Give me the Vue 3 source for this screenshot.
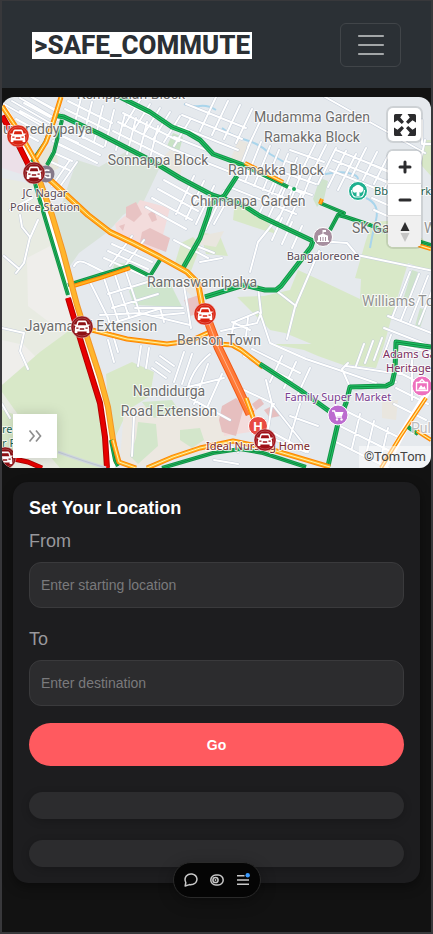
<template>
    <div class="page">
        <header class="navbar">
            <a class="brand" href="#">&gt;SAFE_COMMUTE</a>
            <button class="toggler" type="button" aria-label="Toggle navigation">
                <svg width="30" height="30" viewBox="0 0 30 30">
                    <path d="M3 6h24M3 15h24M3 24h24" stroke="#a3a6a8" stroke-width="2.200" stroke-linecap="round" />
                </svg>
            </button>
        </header>

        <section class="map">
            <svg class="map-canvas" viewBox="2 97 429 371" preserveAspectRatio="xMidYMid slice">
                <rect x="2" y="97" width="429" height="371" fill="#e5e9ed" />
                <path v-for="(a, i) in areas" :key="'a' + i" :d="a.d" :fill="a.fill" />
                <path v-for="(d, i) in water" :key="'w' + i" :d="d" class="water" />
                <path :d="streets" class="street-case" />
                <path :d="streets" class="street" />
                <g v-for="(r, i) in roads" :key="'r' + i" class="road">
                    <path :d="r.d" :stroke="r.edge" :stroke-width="r.w" />
                    <path :d="r.d" :stroke="r.color" :stroke-width="r.w - 2" />
                    <path v-if="r.line" :d="r.d" :stroke="r.line" stroke-width="1" />
                </g>
                <circle cx="294" cy="189" r="2" fill="#19a85b" />

                <text
                    v-for="(l, i) in labels"
                    :key="'l' + i"
                    :x="l.x"
                    :y="l.y"
                    :class="['label', l.kind]"
                    :text-anchor="l.anchor || 'middle'"
                >{{ l.text }}</text>

                <g transform="translate(46 174)">
                    <circle r="8.500" fill="#85798a" />
                    <path d="M3.500-3.500Q-1-5-2.500-2T1 3.500H4V0H-4" fill="none" stroke="#fff" stroke-width="1.500" />
                </g>
                <g transform="translate(323 237)">
                    <circle r="9.500" fill="#a78f9f" stroke="#fff" />
                    <path d="M-6 5v-1.500h1V-1h-.500L0-3.500 5.500-1H5v4.500h1V5zM-.500-3.500V-7H3v2H.500v1.500z" fill="#fff" />
                    <path d="M-2.500 4V0M0 4V0M2.500 4V0" stroke="#a78f9f" />
                </g>
                <g transform="translate(358 191)">
                    <circle r="9.500" fill="#20b090" stroke="#fff" />
                    <path d="M-3.500-4.500Q0-8 3.500-4.500 6.500-3 5 0 3 3 1.500 1L1.500 5h-3L-1.500 1Q-4 3-5.500 0-6.500-3-3.500-4.500z" fill="#fff" />
                    <path d="M-6.500-1Q-6 5-3 6h6Q6 5 6.500-1" fill="none" stroke="#fff" stroke-width="1.200" />
                </g>
                <g transform="translate(338 415)">
                    <circle r="10" fill="#bc6bcf" stroke="#fff" />
                    <path d="M-6-4h2.500L-1.500 2H4" fill="none" stroke="#fff" stroke-width="1.300" />
                    <path d="M-3-3H5.500L4 1h-6z" fill="#fff" />
                    <circle cx="-1" cy="4.500" r="1.200" fill="#fff" />
                    <circle cx="3.500" cy="4.500" r="1.200" fill="#fff" />
                </g>
                <g transform="translate(422 386)">
                    <circle r="10" fill="#ee70be" stroke="#fff" />
                    <path d="M-5.500-3.500h11v8h-11zM-2.500-4L0-6.500 2.500-4" fill="none" stroke="#fff" stroke-width="1.400" />
                    <path d="M-4 3.500L-1-1 1 1.500 2.500 0 4 3.500z" fill="#fff" />
                </g>
                <g transform="translate(258 426)">
                    <circle r="9.500" fill="#e84a42" stroke="#fff" />
                    <text y="5" text-anchor="middle" class="hospital">H</text>
                </g>
                <g v-for="(c, i) in cars" :key="'c' + i" :transform="`translate(${c.x} ${c.y})`">
                    <circle r="11" :fill="c.fill" stroke="#fff" stroke-opacity=".4" />
                    <circle r="9" fill="none" stroke="#fff" stroke-opacity=".22" />
                    <path
                        fill="#fff"
                        d="M-4.500-5.500Q-4-6.500-3-6.500H3Q4-6.500 4.500-5.500L5.700-2.300 7.500-2.700 7.700-1.500 6.500-1Q7.200 0 7.200 1.500V6H4.600V4.500H-4.600V6H-7.200V1.500Q-7.200 0-6.500-1L-7.700-1.500-7.500-2.700-5.700-2.300z"
                    />
                    <path d="M-3.300-4.800H3.300L4.300-1.800H-4.300z" :fill="c.fill" />
                    <path d="M-5.700 1.200h2.200M3.500 1.200h2.200M-2.200 2h4.400" :stroke="c.fill" stroke-width="1.300" />
                </g>
            </svg>

            <div class="controls">
                <button class="control" type="button" aria-label="Fullscreen">
                    <svg width="24" height="24" viewBox="0 0 24 24" fill="#2c2c2e">
                        <path
                            v-for="n in 4"
                            :key="n"
                            :transform="`rotate(${n * 90} 12 12)`"
                            d="M1 2.500Q1 1 2.500 1H9.500L7.200 4.500 11 8.800 8.800 11 4.500 7.200 1 9.500z"
                        />
                    </svg>
                </button>
                <div class="zoom">
                    <button type="button" aria-label="Zoom in">
                        <svg width="14" height="14"><path d="M7 2v10M2 7h10" class="glyph" /></svg>
                    </button>
                    <button type="button" aria-label="Zoom out">
                        <svg width="14" height="14"><path d="M2 7h10" class="glyph" /></svg>
                    </button>
                    <button class="compass" type="button" aria-label="Reset north">
                        <svg width="14" height="20" viewBox="0 0 14 20">
                            <path d="M7 0l4.500 9h-9z" fill="#2c2c2e" />
                            <path d="M7 20l4.500-9h-9z" fill="#c4c4c4" />
                        </svg>
                    </button>
                </div>
            </div>
            <button class="expand" type="button" aria-label="Open panel">
                <svg width="14" height="14" viewBox="0 0 14 14">
                    <path d="M1.500 1.500L6 7l-4.500 5.500M8 1.500L12.500 7 8 12.500" fill="none" stroke="#8f8f8f" stroke-width="1.700" />
                </svg>
            </button>
            <a class="attribution" href="#">©TomTom</a>
        </section>

        <form class="card" @submit.prevent>
            <h2>Set Your Location</h2>
            <div class="field">
                <label for="from">From</label>
                <input id="from" v-model="from" type="text" placeholder="Enter starting location" />
            </div>
            <div class="field">
                <label for="to">To</label>
                <input id="to" v-model="to" type="text" placeholder="Enter destination" />
            </div>
            <button class="go" type="submit">Go</button>
            <div class="results">
                <div class="result"></div>
                <div class="result"></div>
            </div>
        </form>

        <div class="toolbar">
            <button type="button" aria-label="Comments">
                <svg width="16" height="16" viewBox="0 0 16 16">
                    <path d="M2.200 14L2.800 10.500Q1 7 3.300 4 5.500 1.500 9 2q4.500.700 5 5-.200 4-4 5.300-2 .600-3.500.300z" class="outline" />
                </svg>
            </button>
            <button type="button" aria-label="Preview">
                <svg width="16" height="16" viewBox="0 0 16 16">
                    <rect x="1.800" y="3" width="12.400" height="10" rx="5" class="outline" />
                    <circle cx="6.500" cy="8" r="2.600" class="outline" />
                    <circle cx="6.500" cy="8" r=".9" fill="#c9c9c9" />
                </svg>
            </button>
            <button type="button" aria-label="Menu">
                <svg width="16" height="16" viewBox="0 0 16 16">
                    <path d="M2 3.700h7.500M2 7.900h12M2 12.200h12" class="outline" />
                    <circle cx="12.700" cy="3.300" r="2.200" fill="#3b9bff" />
                </svg>
            </button>
        </div>
    </div>
</template>

<script setup>
import { ref } from 'vue';

const from = ref('');
const to = ref('');

// count parallel segments from (x, y), each running (dx, dy) and shifted by (sx, sy)
const hatch = (x, y, dx, dy, sx, sy, count) => {
    let d = '';
    for (let i = 0; i < count; i++) {
        d += `M${x + sx * i} ${y + sy * i}l${dx} ${dy}`;
    }
    return d;
};

const areas = [
    { fill: '#e8ebe2', d: 'M2 178L34 184 66 290 88 345 104 400 108 468H2z' },
    { fill: '#efeeeb', d: 'M27 258l23-12 16 48 8 30-12 8-34-26zM2 340l22 5 12 12-34 28z' },
    { fill: '#d8e8c8', d: 'M2 385L40 352 70 330 84 345 100 400 106 468H60L36 440 2 392z' },
    { fill: '#d8e8c8', d: 'M2 410l14 5-2 45H2z' },
    { fill: '#ece0e8', d: 'M2 125l12 20 16 32-28-9z' },
    { fill: '#e6e5da', d: 'M33 154l22-10 4 24-12 6z' },
    { fill: '#d9e3d9', d: 'M77 160l22 7 30-17 31 17-17 36-20 12-14 16-30 22-14 20-18-65 14-2z' },
    { fill: '#c9e3c6', d: 'M173 133l10 4-4 15-12-6z' },
    { fill: '#e9e6df', d: 'M160 160l12-12 12 10-4 18zM238 140l10 3-8 24-10-6z' },
    { fill: '#f3dcdc', d: 'M140 200l30 8-12 46-40-18-3-12 20-16z' },
    { fill: '#e8c3c3', d: 'M126 207l10-5 6 12-8 8-8-5zM142 232l8-4 8 4 12 6-4 14-26-10zM148 214l6-4 3 10-5 2zM119 226l6-2-2 7z' },
    { fill: '#cfe5cd', d: 'M134 285l16-6 20 4 12 24-48-2-5-14zM115 262l12 2-6 6-8-2z' },
    { fill: '#d8e8c8', d: 'M181 243l12-6 8 8-10 26-16-8zM200 232l20 4 8 20-22-2z' },
    { fill: '#d8e8c8', d: 'M235 200l26 14 16 20-14-4-30-10z' },
    { fill: '#d8e8c8', d: 'M298 270L322 281 360 299 361 279 355 278 366 240 372 222 400 220 431 246V272L408 263 392 316 384 345 376 368 345 364 314 345 285 333 270 330 237 297 264 296 290 290z' },
    { fill: '#d8e8c8', d: 'M272 344l60 0 14 22-28-10-14-6zM422 140l9 0v36l-9-10z' },
    { fill: '#e9e6df', d: 'M200 236l24-5-8 16-18-3zM180 278l26 6-2 26-20-22z' },
    { fill: '#e8c3c3', d: 'M184 300l18-6 2 18-14 4z' },
    { fill: '#d8e8c8', d: 'M106 374l26-12 22 10-4 24-22 14-14 30-6-34z' },
    { fill: '#ece8e1', d: 'M124 408l32-4 70 10 6 34-90 18-22-4z' },
    { fill: '#d3e6cb', d: 'M138 422l18 2 2 22-20 18-8-8 6-18zM180 430l20-2 4 12-12 8-12-8zM142 402l30-2 8 12-26 6z' },
    { fill: '#f3dcdc', d: 'M222 408l18-10 16 12-6 22-26 4z' },
    { fill: '#e6bfbf', d: 'M222 406l14-8 8 8-8 30-14-4-3-12zM252 404l8-6 4 6-8 6zM264 410l8-4 8 10-10 2z' },
    { fill: '#e9e6df', d: 'M382 402l16-2-2 20-14-2z' },
    { fill: '#cfe3cc', d: 'M320 178l8 3-4 18-7 8-4-8zM412 270l6 2-10 30-5-2zM420 308l6 2-6 18-5-2z' },
];

const water = [
    'M184 104q8 3 16 2t16 4',
    'M222 128q10 8 24 12t24 14l14 8',
    'M322 175q16-4 26-2t10 6',
    'M366 198q14 6 10 22t-6 28',
];

const streets = [
    // north west blocks
    hatch(4, 104, 38, 22, 8, -3, 4),
    hatch(12, 127, 26, 14, 4, -8, 5),
    hatch(68, 101, 44, 22, -3, 8, 6),
    hatch(72, 134, 9, -36, 11, 4, 8),
    hatch(58, 134, 20, 9, -3, 9, 4),
    hatch(140, 100, -16, 26, 10, 4, 6),
    hatch(128, 104, 56, 28, -5, 9, 4),
    hatch(52, 186, 18, -26, 7, 2, 2),
    // north centre
    hatch(216, 97, -16, 34, 12, 4, 5),
    hatch(186, 104, 60, 24, -4, 11, 5),
    hatch(164, 180, 40, 22, -6, 9, 4),
    hatch(176, 214, 18, -38, 10, 5, 4),
    hatch(236, 178, 16, -40, 9, 4, 8),
    hatch(232, 188, 64, 26, 4, -10, 3),
    hatch(290, 150, 34, 12, -4, 11, 4),
    hatch(298, 178, 18, -36, 10, 3, 5),
    hatch(260, 212, 14, -30, 9, 4, 4),
    hatch(272, 240, 10, -22, 10, 4, 3),
    // north east
    hatch(336, 150, 60, 24, -3, 10, 3),
    hatch(352, 176, 14, -28, 11, 4, 4),
    hatch(366, 162, 36, 16, 2, 12, 5),
    hatch(390, 218, 10, -36, 10, 2, 3),
    'M325 97L425 153M425 140l-6 28-10 70M422 120v24h9',
    // centre
    hatch(104, 278, 14, 42, 11, -3, 3),
    hatch(108, 294, 46, -14, 4, 14, 3),
    hatch(110, 266, 22, -30, 12, 4, 2),
    hatch(112, 244, 40, 18, -4, 7, 3),
    'M90 282l18 36 10 34M74 266q4-8 14-2l20 10M135 308h48M160 308l4 14M183 280l8 48M100 315l40-2 50 12M152 316l32-3M214 224l10-18M200 262l22-4',
    'M194 245l20 8M174 240l34 18M258 287l3 26-4 10-36 8M260 313l10 30 36 16 30 10 40 14M230 344l4-22 24-10M232 322l18 8M248 318l-2 18M319 251l-24 56-8 32M278 292l18 14M319 241l28 2 10 12 76 16M250 272l8-30 22-27',
    'M20 215l2 12 8 10-6 26-8 10M4 256l14 12M38 220l-8 18M2 328l22 5-4 18 8 18M10 210l22-12M2 404l8 14',
    // south centre
    hatch(141, 346, -3, 20, 8, 2, 2),
    hatch(160, 356, 14, 10, -4, 6, 3),
    hatch(174, 382, 10, -30, 8, 2, 2),
    'M108 340l6 22M186 396q4-26 24-42M190 398l40 22M184 388l40-10M208 364l-14 40M222 374l-16 36M152 408l-18 8-2 40M218 452q10-12 20 0M214 460l24 4',
    hatch(244, 356, 48, 24, 8, -7, 2),
    hatch(270, 382, 12, -26, 14, 6, 3),
    'M266 380l6 24 30 38M272 404l-4 26 40 22M300 404l-12 40M290 416l28 10M276 440l30 12M244 390l30 14',
    // south east
    hatch(344, 410, 56, 28, -4, 16, 3),
    hatch(352, 448, 8, -34, 14, 7, 3),
    'M346 366l54 8M350 390l46-8',
    hatch(356, 366, 8, -22, 9, -3, 4),
    hatch(392, 318, 18, -46, 9, 2, 4),
    hatch(384, 328, 46, 18, 4, -12, 2),
    hatch(398, 372, 32, 16, -2, 16, 3),
    'M400 345l32 8M412 360v40M350 387l-8-18 6-6',
].join('');

const green = { color: '#1fc065', edge: '#159447', line: '#11873f', w: 5 };
const amber = { color: '#ffb21f', edge: '#ff8400', line: '#fff0b0', w: 6 };
const red = { color: '#e60000', edge: '#b30000', w: 6 };
const plain = { color: '#ffffff', edge: '#ffffff', w: 6 };

const roads = [
    { ...plain, d: 'M34 178L50 222 73 295 89 345 104 400 110 437 112 468' },
    { ...plain, d: 'M4 108L22 138 37 170' },
    { ...green, d: 'M120 97L150 112 172 127 188 133 200 140 213 154 243 165' },
    { ...green, w: 4, d: 'M243 165L284 185M284 185l4 2' },
    { ...amber, w: 4, d: 'M245 163L283 182' },
    { ...green, d: 'M54 115L64 117 100 134 152 161 180 178 212 195 243 205 260 216 313 241 311 247 281 286 276 290 265 290 244 285 205 297' },
    { ...green, w: 4, d: 'M320 203L344 213 338 215 330 230M338 215L346 217 370 225 386 232' },
    { ...amber, w: 4, line: '', d: 'M320 204l2-5' },
    { ...green, w: 4, d: 'M414 240L431 245' },
    { ...amber, w: 4, d: 'M418 245L431 249' },
    { ...green, d: 'M237 176L224 196 211 204 208 215 200 238 183 268' },
    { ...green, w: 4, d: 'M62 120L54 152 47 165M55 118L45 143 32 162' },
    { ...amber, w: 5, d: 'M61 97L53 123 46 142 35 160' },
    { ...amber, w: 5, d: 'M2 106L18 130 38 165' },
    { ...red, d: 'M2 116L18 144 30 168' },
    { ...green, w: 4, d: 'M34 180L45 218 68 295' },
    { ...green, w: 4, d: 'M68 285L100 275 130 266 150 276 160 260' },
    { ...amber, w: 4, line: '', d: 'M70 287L100 278 130 268' },
    { color: '#ffb52c', edge: '#f29528', w: 6, d: 'M38 176L52 215 63 252 77 305 88 340 100 377 108 407 113 440 117 463' },
    { ...red, d: 'M68 298L82 345 100 403 105 437 107 468' },
    { ...amber, d: 'M48 178L88 215 110 232 133 243 160 257 187 272 198 283 203 310' },
    { ...amber, w: 5, d: 'M92 330L127 339 167 344 190 341 212 331' },
    { ...amber, w: 5, d: 'M218 344L232 345 241 350 263 367' },
    { ...green, d: 'M260 364L300 390 336 416' },
    { color: '#ff7a38', edge: '#f05a18', line: '#ffb289', w: 9, d: 'M205 313L218 347 233 378 250 414' },
    { ...amber, w: 5, d: 'M246 398L254 420 265 446' },
    { ...green, w: 5, d: 'M328 466L338 423 346 403 350 387 386 386 392 383 395 370 396 342 431 347' },
    { ...green, w: 4, d: 'M111 440L115 460 118 466M162 468L213 453 240 449 263 453 306 467' },
    { ...amber, w: 5, d: 'M113 440L119 462 136 468M147 468L173 457 200 448 233 441 266 448 330 467' },
    { ...plain, d: 'M431 386L403 432 384 468' },
    { ...amber, w: 4, d: 'M426 398L400 437 381 468' },
    { ...green, w: 4, d: 'M408 427L418 434' },
    { ...amber, w: 4, d: 'M417 431L431 440' },
    { ...red, w: 5, d: 'M14 459L28 462 42 468' },
    { color: '#bcc6d0', edge: '#cfd6de', w: 3, d: 'M58 452L84 461 106 468' },
];

const labels = [
    { text: 'Kemppalan Block', x: 131, y: 99, kind: 'place' },
    { text: 'uvareddypalya', x: 3, y: 134, kind: 'place', anchor: 'start' },
    { text: 'Sonnappa Block', x: 158, y: 165, kind: 'place' },
    { text: 'Mudamma Garden', x: 312, y: 122, kind: 'place' },
    { text: 'Ramakka Block', x: 312, y: 142, kind: 'place' },
    { text: 'Ramakka Block', x: 276, y: 175, kind: 'place' },
    { text: 'Chinnappa Garden', x: 248, y: 206, kind: 'place' },
    { text: 'Ramaswamipalya', x: 202, y: 287, kind: 'place' },
    { text: 'Jayamahal Extension', x: 91, y: 331, kind: 'place' },
    { text: 'Benson Town', x: 219, y: 345, kind: 'place' },
    { text: 'Nandidurga', x: 169, y: 396, kind: 'place' },
    { text: 'Road Extension', x: 169, y: 416, kind: 'place' },
    { text: 'SK Garden', x: 352, y: 233, kind: 'place', anchor: 'start' },
    { text: 'Williams Town', x: 362, y: 306, kind: 'place faded', anchor: 'start' },
    { text: 'W', x: 424, y: 233, kind: 'place faded', anchor: 'start' },
    { text: 'Pul', x: 411, y: 433, kind: 'place light', anchor: 'start' },
    { text: 'JC Nagar', x: 45, y: 197, kind: 'poi' },
    { text: 'Police Station', x: 45, y: 211, kind: 'poi' },
    { text: 'Bangaloreone', x: 323, y: 260, kind: 'poi' },
    { text: 'Bbmp Park', x: 374, y: 195, kind: 'poi park', anchor: 'start' },
    { text: 'Adams Gate', x: 383, y: 358, kind: 'poi museum', anchor: 'start' },
    { text: 'Heritage', x: 386, y: 372, kind: 'poi museum', anchor: 'start' },
    { text: 'Family Super Market', x: 338, y: 401, kind: 'poi shop' },
    { text: 'Ideal Nursing Home', x: 258, y: 450, kind: 'poi health' },
    { text: 're', x: 2, y: 433, kind: 'poi park', anchor: 'start' },
    { text: 'r P', x: 2, y: 447, kind: 'poi park', anchor: 'start' },
];

const cars = [
    { x: 18, y: 136, fill: '#d92310' },
    { x: 34, y: 173, fill: '#8e1014' },
    { x: 82, y: 327, fill: '#8e1014' },
    { x: 205, y: 314, fill: '#d92310' },
    { x: 265, y: 440, fill: '#a00f16' },
    { x: 5, y: 458, fill: '#8e1014' },
];
</script>

<style>
body {
    margin: 0;
    background-color: #121212;
}
</style>

<style scoped>
.page {
    position: relative;
    box-sizing: border-box;
    min-height: 100vh;
    border: 2px solid #38383b;
    border-top-width: 1px;
    background-color: #121212;
    font-family: "Liberation Sans", Arial, sans-serif;
}

button {
    display: flex;
    align-items: center;
    justify-content: center;
    padding: 0;
    border: none;
    cursor: pointer;
}

.navbar {
    display: flex;
    justify-content: space-between;
    align-items: center;
    padding: 22px 30px 21px;
    background-color: #2b3035;
}

.brand {
    padding: 0 2px;
    background-color: #fff;
    color: #2b3035;
    font-family: Roboto, sans-serif;
    font-size: 26px;
    font-weight: 800;
    line-height: 27px;
    text-decoration: none;
}

.toggler {
    width: 61px;
    height: 44px;
    border: 1px solid #414549;
    border-radius: 6px;
    background: none;
}

.map {
    position: relative;
    height: 371px;
    margin-top: 9px;
    border-radius: 12px;
    overflow: hidden;
}

.map-canvas {
    display: block;
    width: 100%;
    height: 100%;
}

.water {
    fill: none;
    stroke: #a9d5ec;
    stroke-width: 2;
}

.street,
.street-case {
    fill: none;
    stroke: #fff;
    stroke-width: 2;
    stroke-linecap: round;
    stroke-linejoin: round;
}

.street-case {
    stroke: #c6ceda;
    stroke-width: 3;
}

.road {
    fill: none;
    stroke-linejoin: round;
}

.label {
    paint-order: stroke;
    stroke: rgba(255, 255, 255, 0.8);
    stroke-width: 2px;
    stroke-linejoin: round;
}

.place {
    fill: #6c6c6c;
    font-family: Roboto, sans-serif;
    font-size: 14px;
}

.faded {
    fill: #929292;
}

.light {
    fill: #bdbdbd;
}

.poi {
    fill: #5a4b58;
    font-family: "Noto Sans", sans-serif;
    font-size: 11px;
}

.park {
    fill: #1f6655;
}

.museum {
    fill: #7c2f61;
}

.shop {
    fill: #7b3f91;
}

.health {
    fill: #7d2727;
}

.hospital {
    fill: #fff;
    font-family: "Liberation Sans", sans-serif;
    font-size: 13px;
    font-weight: bold;
}

.controls {
    position: absolute;
    top: 11px;
    right: 10px;
    display: flex;
    flex-direction: column;
    gap: 10px;
}

.control,
.zoom {
    width: 33px;
    border-radius: 5px;
    background-color: #fff;
    box-shadow: 0 0 0 2px rgba(0, 0, 0, 0.1);
    overflow: hidden;
}

.control {
    height: 33px;
}

.zoom button {
    width: 100%;
    height: 32px;
    background-color: #fff;
}

.zoom button + button {
    border-top: 1px solid #ddd;
}

.zoom .compass {
    background-color: #f0f0f0;
}

.glyph {
    stroke: #2c2c2e;
    stroke-width: 3;
    stroke-linecap: round;
}

.expand {
    position: absolute;
    left: 11px;
    bottom: 10px;
    width: 44px;
    height: 44px;
    background-color: #fff;
    box-shadow: 0 0 12px rgba(0, 0, 0, 0.15);
}

.attribution {
    position: absolute;
    right: 0;
    bottom: 0;
    padding: 0 5px;
    background-color: rgba(255, 255, 255, 0.5);
    color: #444;
    font-family: Roboto, sans-serif;
    font-size: 13px;
    line-height: 22px;
    text-decoration: none;
}

.card {
    margin: 14px 11px 0;
    padding: 16px;
    border-radius: 15px;
    background-color: #1d1d1f;
    box-shadow: 0 4px 12px rgba(0, 0, 0, 0.4);
}

h2 {
    margin: 0 0 12px;
    color: #fff;
    font-size: 18px;
    line-height: 20px;
}

.field {
    margin-bottom: 20px;
}

label {
    display: block;
    margin-bottom: 10px;
    color: #98989c;
    font-size: 18px;
    line-height: 22px;
}

input {
    display: block;
    box-sizing: border-box;
    width: 100%;
    height: 46px;
    padding: 0 11px;
    border: 1px solid #3a3a3c;
    border-radius: 12px;
    background-color: #2c2c2e;
    color: #fff;
    font-family: inherit;
    font-size: 14px;
}

input::placeholder {
    color: #7a7a7c;
    opacity: 1;
}

.go {
    width: 100%;
    height: 43px;
    margin-top: -3px;
    border-radius: 22px;
    background-color: #ff5a5f;
    color: #fff;
    font-family: inherit;
    font-size: 14px;
    font-weight: bold;
}

.results {
    display: flex;
    flex-direction: column;
    gap: 21px;
    margin-top: 26px;
}

.result {
    height: 27px;
    border-radius: 14px;
    background-color: #2c2c2e;
    box-shadow: 0 2px 8px rgba(0, 0, 0, 0.2);
}

.toolbar {
    position: fixed;
    left: 50%;
    bottom: 36px;
    transform: translateX(-50%);
    display: flex;
    gap: 10px;
    padding: 9px;
    border: 1px solid #2a2a2a;
    border-radius: 18px;
    background-color: #050505;
    box-shadow: 0 4px 16px rgba(0, 0, 0, 0.3);
}

.toolbar button {
    background: none;
}

.outline {
    fill: none;
    stroke: #c9c9c9;
    stroke-width: 1.500;
    stroke-linejoin: round;
}
</style>
